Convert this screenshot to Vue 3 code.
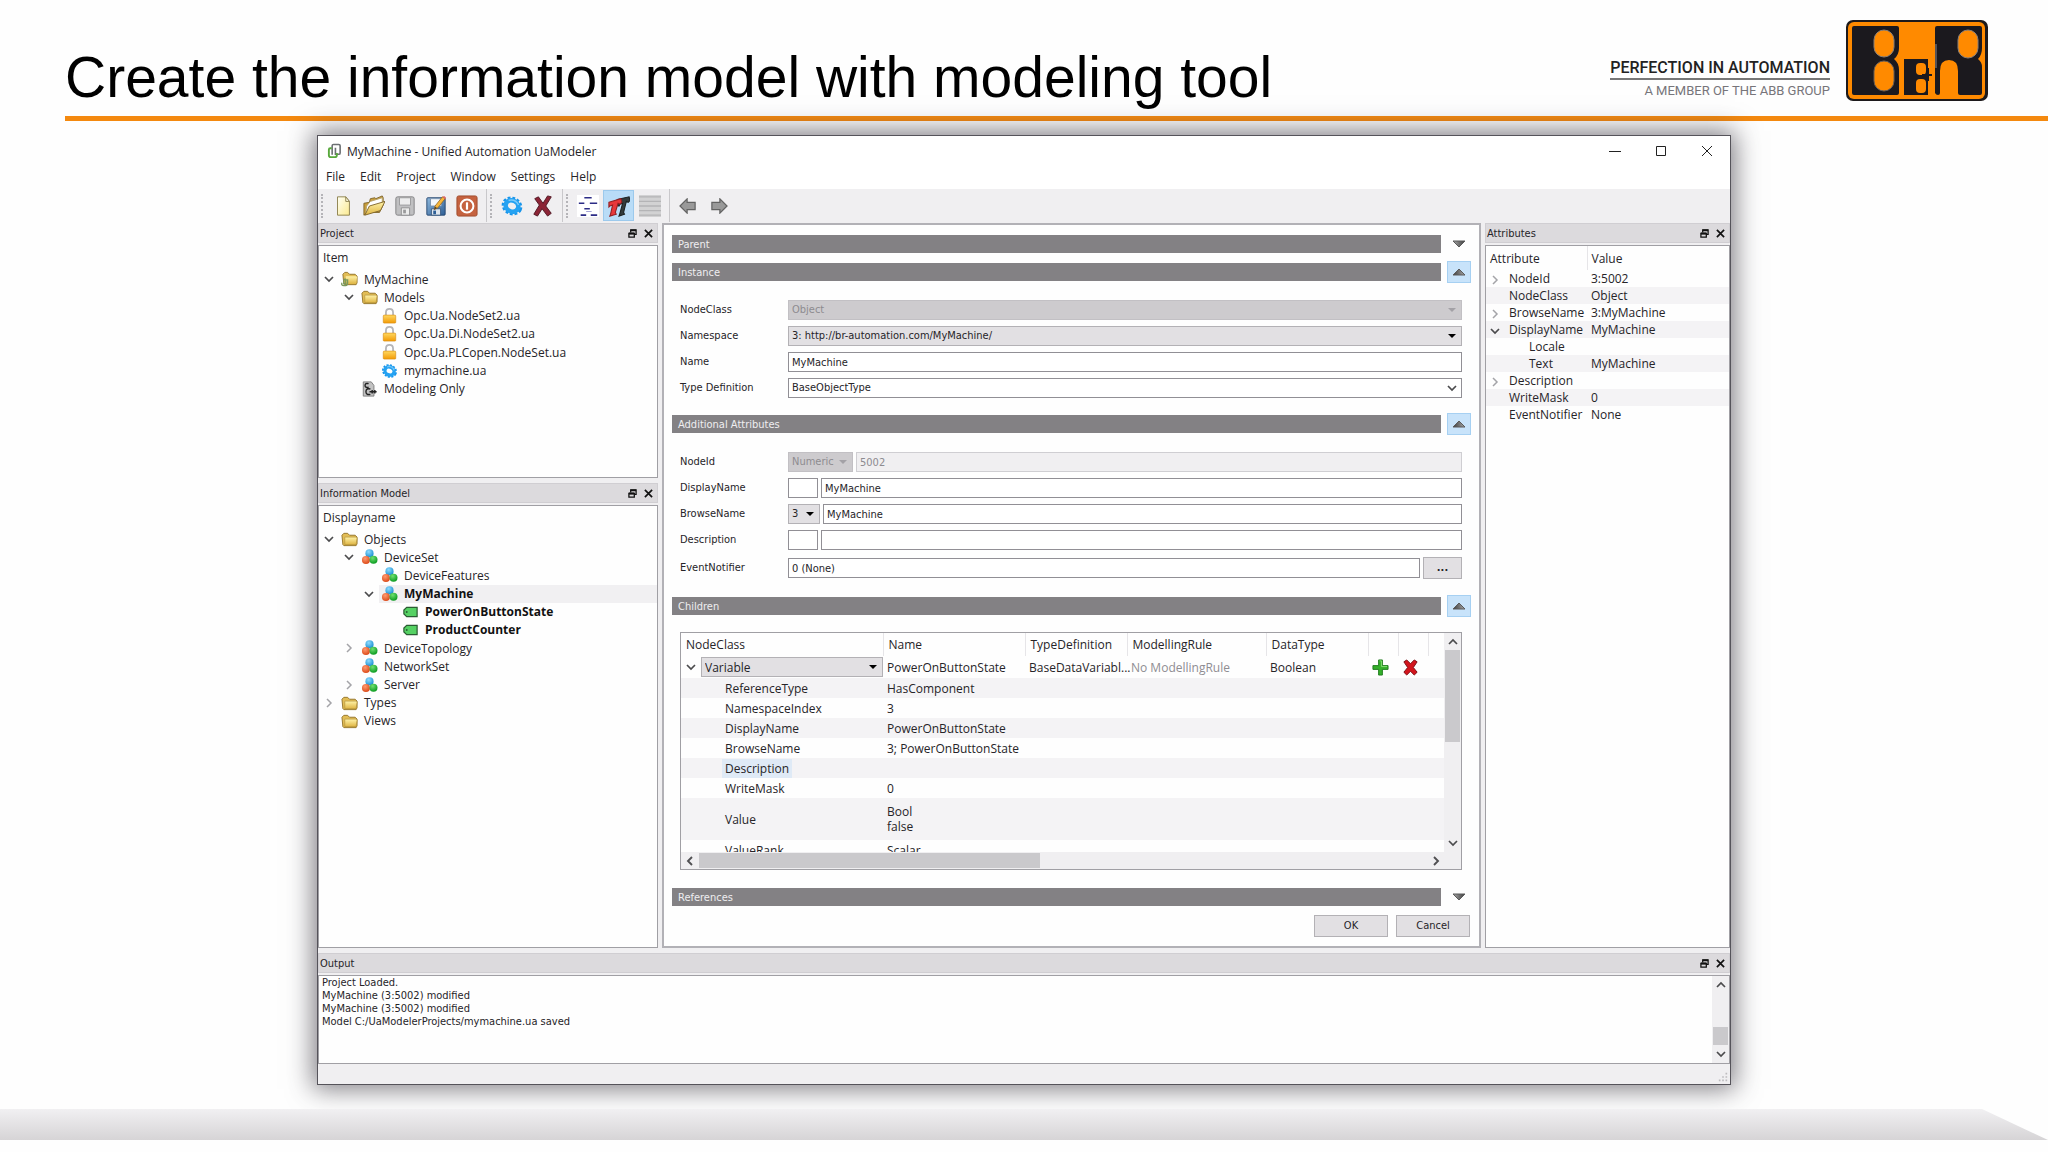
<script setup>
import { ref } from 'vue'

const menus = ['File', 'Edit', 'Project', 'Window', 'Settings', 'Help']

const toolGroups = [
  [
    { icon: 'new', label: 'New' },
    { icon: 'open', label: 'Open' },
    { icon: 'save', label: 'Save' },
    { icon: 'saveas', label: 'Save as' },
    { icon: 'power', label: 'Close project' }
  ],
  [
    { icon: 'gear', label: 'Generate' },
    { icon: 'cross', label: 'Delete' }
  ],
  [
    { icon: 'list', label: 'Tree view' },
    { icon: 'types', label: 'Type view', active: true },
    { icon: 'lines', label: 'Table view' }
  ]
]

const projectTree = [
  { depth: 0, arrow: 'open', icon: 'project', text: 'MyMachine' },
  { depth: 1, arrow: 'open', icon: 'folder', text: 'Models' },
  { depth: 2, icon: 'lock', text: 'Opc.Ua.NodeSet2.ua' },
  { depth: 2, icon: 'lock', text: 'Opc.Ua.Di.NodeSet2.ua' },
  { depth: 2, icon: 'lock', text: 'Opc.Ua.PLCopen.NodeSet.ua' },
  { depth: 2, icon: 'gear', text: 'mymachine.ua' },
  { depth: 1, icon: 'code', text: 'Modeling Only' }
]

const modelTree = [
  { depth: 0, arrow: 'open', icon: 'folder', text: 'Objects' },
  { depth: 1, arrow: 'open', icon: 'balls', text: 'DeviceSet' },
  { depth: 2, icon: 'balls', text: 'DeviceFeatures' },
  { depth: 2, arrow: 'open', icon: 'balls', text: 'MyMachine', bold: true, current: true },
  { depth: 3, icon: 'tag', text: 'PowerOnButtonState', bold: true },
  { depth: 3, icon: 'tag', text: 'ProductCounter', bold: true },
  { depth: 1, arrow: 'closed', icon: 'balls', text: 'DeviceTopology' },
  { depth: 1, icon: 'balls', text: 'NetworkSet' },
  { depth: 1, arrow: 'closed', icon: 'balls', text: 'Server' },
  { depth: 0, arrow: 'closed', icon: 'folder', text: 'Types' },
  { depth: 0, icon: 'folder', text: 'Views' }
]

const leftDocks = [
  { title: 'Project', header: 'Item', rows: projectTree, kind: 'project' },
  { title: 'Information Model', header: 'Displayname', rows: modelTree, kind: 'model' }
]

const attributes = [
  { arrow: 'closed', name: 'NodeId', value: '3:5002' },
  { name: 'NodeClass', value: 'Object' },
  { arrow: 'closed', name: 'BrowseName', value: '3:MyMachine' },
  { arrow: 'open', name: 'DisplayName', value: 'MyMachine' },
  { child: true, name: 'Locale', value: '' },
  { child: true, name: 'Text', value: 'MyMachine' },
  { arrow: 'closed', name: 'Description', value: '' },
  { name: 'WriteMask', value: '0' },
  { name: 'EventNotifier', value: 'None' }
]

const childProps = [
  { name: 'ReferenceType', value: ['HasComponent'] },
  { name: 'NamespaceIndex', value: ['3'] },
  { name: 'DisplayName', value: ['PowerOnButtonState'] },
  { name: 'BrowseName', value: ['3; PowerOnButtonState'] },
  { name: 'Description', value: [''], hover: true },
  { name: 'WriteMask', value: ['0'] },
  { name: 'Value', value: ['Bool', 'false'] },
  { name: 'ValueRank', value: ['Scalar'] }
]

const outputLines = [
  'Project Loaded.',
  'MyMachine (3:5002) modified',
  'MyMachine (3:5002) modified',
  'Model C:/UaModelerProjects/mymachine.ua saved'
]

const name = ref('MyMachine')
const displayName = ref('MyMachine')
const browseName = ref('MyMachine')
</script>

<template>
  <div class="slide">
    <svg class="sprite" aria-hidden="true">
      <defs>
        <linearGradient id="gFolder" x1="0" y1="0" x2="0" y2="1"><stop offset="0" stop-color="#fff3a8" /><stop offset="1" stop-color="#dfb544" /></linearGradient>
        <linearGradient id="gLock" x1="0" y1="0" x2="0" y2="1"><stop offset="0" stop-color="#ffd860" /><stop offset="1" stop-color="#f29a05" /></linearGradient>
        <linearGradient id="gPage" x1="0" y1="0" x2="1" y2="1"><stop offset="0" stop-color="#fffff4" /><stop offset="1" stop-color="#fbea90" /></linearGradient>
        <linearGradient id="gDisk" x1="0" y1="0" x2="1" y2="1"><stop offset="0" stop-color="#8db7dc" /><stop offset="1" stop-color="#2e5f96" /></linearGradient>
        <linearGradient id="gTri" x1="0" y1="0" x2="1" y2="0"><stop offset="0" stop-color="#a8a8a8" /><stop offset="1" stop-color="#3c3c3c" /></linearGradient>
        <radialGradient id="gBlue" cx=".4" cy=".3" r=".7"><stop offset="0" stop-color="#8fdcff" /><stop offset="1" stop-color="#1a8fd0" /></radialGradient>
        <radialGradient id="gRed" cx=".4" cy=".3" r=".7"><stop offset="0" stop-color="#ff9a70" /><stop offset="1" stop-color="#dc4a18" /></radialGradient>
        <radialGradient id="gGreen" cx=".4" cy=".3" r=".7"><stop offset="0" stop-color="#6fe070" /><stop offset="1" stop-color="#0d9c22" /></radialGradient>
      </defs>
      <symbol id="ua-logo" viewBox="0 0 16 16"><path d="M5.500 12V2.500q0-1.500 1.500-1.500h5.500q1.500 0 1.500 1.500V10q0 1.500-1.500 1.500H9V4.500" fill="none" stroke="#6b6f72" stroke-width="1.700" /><path d="M5 5H3.500Q2 5 2 6.500v6Q2 14.500 4 14.500h4.500q2 0 2-2V10" fill="none" stroke="#58a83c" stroke-width="2" /></symbol>
      <symbol id="new" viewBox="0 0 24 24"><path d="M6 2h9l4 5v15H6z" fill="url(#gPage)" stroke="#8a7e4a" /><path d="M15 2v5h4z" fill="#fffbe0" stroke="#8a7e4a" /></symbol>
      <symbol id="open" viewBox="0 0 24 24"><path d="M1 9l6-1 1-4 5-1 1 1 7-3 1 2v8l-4 8H5l-4 3z" fill="#c99e3a" stroke="#7e642a" /><path d="M4 12l4-5 13-4v5L9 15l-6 5z" fill="#fff" stroke="#b7a46c" /><path d="M2 22l5-10 17-5-5 10z" fill="url(#gFolder)" stroke="#7e642a" /></symbol>
      <symbol id="save" viewBox="0 0 24 24"><rect x="2" y="2" width="20" height="20" rx="2" fill="#c0c0c2" stroke="#7e7e80" /><path d="M6 3h12v8H6z" fill="#ededee" stroke="#98989a" /><path d="M8 14h9v8H8z" fill="#ececec" stroke="#8e8e90" /><path d="M10 16h3v4h-3z" fill="#99999b" /></symbol>
      <symbol id="saveas" viewBox="0 0 24 24"><rect x="2" y="3" width="20" height="19" rx="1" fill="url(#gDisk)" stroke="#24456e" /><path d="M6 4h12v8H6z" fill="#f4f7fb" stroke="#7b92ad" /><path d="M7 15h10v7H7z" fill="#dfe6ee" stroke="#3a5a80" /><path d="M9 17h3v4H9z" fill="#2e5f96" /><path d="M10 16l1-4L19 2l3 2-8 10z" fill="#f7b63a" stroke="#8a5c1c" stroke-width=".8" /><path d="M19 2l2-1 2 2-1 2z" fill="#e06a6a" /><path d="M10 16l1-3 2 1z" fill="#333" /></symbol>
      <symbol id="power" viewBox="0 0 24 24"><rect x="1" y="1" width="22" height="22" rx="2" fill="#c5623f" stroke="#a04a2c" /><circle cx="12" cy="12" r="7" fill="none" stroke="#fff" stroke-width="2.200" /><path d="M12 8v8" stroke="#fff" stroke-width="2.400" /></symbol>
      <symbol id="gear" viewBox="0 0 24 24"><g transform="rotate(25 12 12)"><ellipse cx="12" cy="12" rx="10" ry="8.500" fill="none" stroke="#1794ea" stroke-width="3" stroke-dasharray="3 2" /><ellipse cx="12" cy="12" rx="7" ry="6" fill="none" stroke="#25a2f2" stroke-width="5" /><path d="M6 8q6-5 12 0" fill="none" stroke="#7ccbfa" stroke-width="1.500" /></g></symbol>
      <symbol id="cross" viewBox="0 0 24 24"><path d="M3 4l4-2 5 7 5-8 4 1-6 10 6 8-4 3-6-8-5 8-4-2 6-10z" fill="#8c2436" stroke="#4e1521" /></symbol>
      <symbol id="list" viewBox="0 0 24 24"><path fill="#fff" d="M0 0h24v24H0z" /><path d="M8 3h8M2 9h6M14 9h8M8 15h6M4 22h6M15 22h7" stroke="#2c2c86" stroke-width="1.800" /><path d="M10 18h6" stroke="#9a9ad0" /></symbol>
      <symbol id="types" viewBox="0 0 24 24"><path d="M10 5l13-3 1 4-2 2-2-1-3 12 1 2-6 2 1-3 3-11-3 1-1 2-3-1z" fill="#333b3c" stroke="#1c2222" stroke-width="1.200" /><path d="M1 8l13-4 1 4-2 2-2-1-3 10 1 2-7 2 1-3 2-9-3 1-1 1z" fill="#e8383b" stroke="#951f22" stroke-width="1.200" /></symbol>
      <symbol id="lines" viewBox="0 0 24 24"><path fill="#d2d2d3" d="M0 0h24v24H0z" /><path d="M0 2h24M0 7h24M0 12h24M0 17h24M0 22h24" stroke="#b4b4b6" stroke-width="1.500" /></symbol>
      <symbol id="arrow" viewBox="0 0 20 18"><path d="M1 9l8-8v4h9v8H9v4z" fill="#999" stroke="#636363" stroke-width="1.400" /></symbol>
      <symbol id="folder" viewBox="0 0 18 16"><path d="M2 14L1 4l2-2h4l2 2h6l2 2v7l-1 2H3z" fill="#e2bd55" stroke="#94752a" /><path d="M4 6h12l1 1-1 7H4z" fill="url(#gFolder)" stroke="#b08e37" stroke-width=".7" /></symbol>
      <symbol id="project" viewBox="0 0 18 16"><path d="M3 13L2 3l2-2h3l2 2h6l2 2v7l-1 2H4z" fill="#e2bd55" stroke="#94752a" /><path d="M5 5h11l1 1-1 7H5z" fill="url(#gFolder)" /><path d="M1 12q-1 3 2 3h2q2 0 2-3V9H5v4H3V10q0-2 2-2" fill="none" stroke="#79985c" stroke-width="1.400" /></symbol>
      <symbol id="lock" viewBox="0 0 18 18"><path d="M5 9V5q0-4 4-4t4 4v4" fill="none" stroke="#b5b5b8" stroke-width="2" /><rect x="2" y="8" width="14" height="9" rx="1" fill="url(#gLock)" stroke="#d98c10" stroke-width=".7" /></symbol>
      <symbol id="code" viewBox="0 0 18 18"><path d="M2 1h9l3 4v12H2z" fill="#c2c2c2" stroke="#777" /><path d="M8 3Q4 2 4 5t4 2M10 9q-5-1-5 3t5 3M9 12h8M12 10v4M15 10v4" fill="none" stroke="#222" stroke-width="1.600" /></symbol>
      <symbol id="balls" viewBox="0 0 18 18"><circle cx="9" cy="5" r="4.600" fill="url(#gBlue)" /><circle cx="5" cy="12.500" r="4.500" fill="url(#gRed)" /><circle cx="13.500" cy="12" r="4.500" fill="url(#gGreen)" /></symbol>
      <symbol id="tag" viewBox="0 0 18 14"><path d="M5 2h11v10H5L2 9V5z" fill="#55d163" stroke="#2b5c33" stroke-width="1.300" /><circle cx="5" cy="7" r="1" fill="#2b5c33" /></symbol>
      <symbol id="open-arrow" viewBox="0 0 10 10"><path d="M1 3l4 4 4-4" fill="none" stroke="#4b4b4d" stroke-width="1.700" /></symbol>
      <symbol id="closed-arrow" viewBox="0 0 10 10"><path d="M3 1l4 4-4 4" fill="none" stroke="#a4a4a8" stroke-width="1.500" /></symbol>
      <symbol id="right-arrow" viewBox="0 0 10 10"><path d="M3 1l4 4-4 4" fill="none" stroke="#505052" stroke-width="1.900" /></symbol>
      <symbol id="caret" viewBox="0 0 10 10"><path d="M1 3h8L5 7z" /></symbol>
      <symbol id="tri" viewBox="0 0 14 8"><path d="M1 1h12L7 7z" fill="url(#gTri)" stroke="#5a5a5a" /></symbol>
      <symbol id="float" viewBox="0 0 10 10"><path d="M3 4V1h6v5H7" fill="none" stroke="#111" stroke-width="1.400" /><path d="M3 1.500h6M1 5h6" stroke="#111" stroke-width="2" /><path d="M1 5h6v4H1z" fill="none" stroke="#111" stroke-width="1.400" /></symbol>
      <symbol id="close" viewBox="0 0 10 10"><path d="M1 1l8 8M9 1L1 9" stroke="#111" stroke-width="1.900" /></symbol>
      <symbol id="plus" viewBox="0 0 18 18"><path d="M7 1h4v6h6v4h-6v6H7v-6H1V7h6z" fill="#35b02a" stroke="#1e7a1c" /><path d="M8 2h2v6h6" fill="none" stroke="#85dd73" /></symbol>
      <symbol id="remove" viewBox="0 0 18 18"><path d="M2 3l3-2 4 4 4-4 3 2-4 6 4 5-3 3-4-4-4 4-3-3 4-5z" fill="#d3151d" stroke="#7a0c12" /></symbol>
    </svg>

    <header class="slide-head">
      <h1>Create the information model with modeling tool</h1>
      <div class="brand">
        <div class="claim">
          <strong>PERFECTION IN AUTOMATION</strong>
          <span>A MEMBER OF THE ABB GROUP</span>
        </div>
        <svg class="logo" viewBox="0 0 142 81" role="img" aria-label="B&amp;R">
          <rect width="142" height="81" rx="7" fill="#1d1a1c" />
          <rect x="2" y="2" width="137" height="77" rx="6" fill="#ff8a00" />
          <path d="M8 6h43q2 0 2 2v20q0 7-5 11 5 4 5 11v23q0 2-2 2H8q-2 0-2-2V8q0-2 2-2z" fill="#1b191e" />
          <rect x="28" y="10" width="20" height="27" rx="10" fill="#ff8a00" stroke="#8a8078" />
          <rect x="28" y="41" width="20" height="30" rx="10" fill="#ff8a00" stroke="#6a6058" />
          <path d="M58 39h24v36H58z" fill="#1b191e" />
          <rect x="70" y="43" width="10" height="12" rx="4" fill="#ff8a00" />
          <rect x="70" y="59" width="10" height="14" rx="4" fill="#ff8a00" />
          <path d="M76 55h10M82 48v13" stroke="#1b191e" stroke-width="2" />
          <path d="M91 6h43q2 0 2 2v20q0 7-4 11 4 3 4 8v26q0 2-2 2h-20q-2 0-2-2V51q0-11-9-11t-9 11v22q0 2-2 2t-3-2V8q0-2 2-2z" fill="#1b191e" />
          <path d="M90 24v24" stroke="#8f8c90" />
          <rect x="112" y="10" width="20" height="28" rx="10" fill="#ff8a00" stroke="#8a8078" />
        </svg>
      </div>
    </header>

    <main class="window">
      <div class="titlebar">
        <svg class="app-icon"><use href="#ua-logo" /></svg>
        <span>MyMachine - Unified Automation UaModeler</span>
        <div class="win-buttons">
          <button type="button" aria-label="Minimize"><svg viewBox="0 0 12 12"><path d="M0 6.500h12" /></svg></button>
          <button type="button" aria-label="Maximize"><svg viewBox="0 0 12 12"><path d="M1.500 1.500h9v9h-9z" /></svg></button>
          <button type="button" aria-label="Close"><svg viewBox="0 0 12 12"><path d="M1 1l10 10M11 1L1 11" /></svg></button>
        </div>
      </div>

      <nav class="menubar">
        <button v-for="m in menus" :key="m" type="button">{{ m }}</button>
      </nav>

      <div class="toolbar">
        <div v-for="(group, i) in toolGroups" :key="i" class="tool-group">
          <i class="grip"></i>
          <button v-for="t in group" :key="t.icon" type="button" :aria-label="t.label" :class="{ active: t.active }">
            <svg><use :href="'#' + t.icon" /></svg>
          </button>
        </div>
        <div class="tool-group nav-group">
          <button type="button" aria-label="Back"><svg><use href="#arrow" /></svg></button>
          <button type="button" aria-label="Forward"><svg class="flip"><use href="#arrow" /></svg></button>
        </div>
      </div>

      <div class="work">
        <div class="left">
          <section v-for="d in leftDocks" :key="d.title" class="dock" :class="d.kind">
            <header class="dock-head">
              <h2>{{ d.title }}</h2>
              <button type="button" aria-label="Float"><svg><use href="#float" /></svg></button>
              <button type="button" aria-label="Close"><svg><use href="#close" /></svg></button>
            </header>
            <div class="pane">
              <div class="tree-head">{{ d.header }}</div>
              <ul class="tree">
                <li v-for="r in d.rows" :key="r.text" :class="['depth' + r.depth, { bold: r.bold }]">
                  <span class="twist"><svg v-if="r.arrow"><use :href="'#' + r.arrow + '-arrow'" /></svg></span>
                  <span class="node" :class="{ current: r.current }">
                    <svg><use :href="'#' + r.icon" /></svg>{{ r.text }}
                  </span>
                </li>
              </ul>
            </div>
          </section>
        </div>

        <form class="editor" @submit.prevent>
          <div class="section-head">
            <h3>Parent</h3>
            <button type="button" aria-label="Expand Parent"><svg><use href="#tri" /></svg></button>
          </div>
          <div class="section-head">
            <h3>Instance</h3>
            <button type="button" class="on" aria-label="Collapse Instance"><svg><use href="#tri" /></svg></button>
          </div>
          <div class="fields">
            <div class="field">
              <label for="nodeClass">NodeClass</label>
              <span class="combo off"><select id="nodeClass" disabled><option>Object</option></select><svg><use href="#caret" /></svg></span>
            </div>
            <div class="field">
              <label for="namespace">Namespace</label>
              <span class="combo"><select id="namespace"><option>3: http://br-automation.com/MyMachine/</option></select><svg><use href="#caret" /></svg></span>
            </div>
            <div class="field">
              <label for="name">Name</label>
              <input id="name" v-model="name" type="text">
            </div>
            <div class="field">
              <label for="typeDef">Type Definition</label>
              <span class="combo plain"><select id="typeDef"><option>BaseObjectType</option></select><svg><use href="#open-arrow" /></svg></span>
            </div>
          </div>

          <div class="section-head">
            <h3>Additional Attributes</h3>
            <button type="button" class="on" aria-label="Collapse Additional Attributes"><svg><use href="#tri" /></svg></button>
          </div>
          <div class="fields">
            <div class="field">
              <label for="nodeId">NodeId</label>
              <span class="combo off id-kind"><select aria-label="Identifier type" disabled><option>Numeric</option></select><svg><use href="#caret" /></svg></span>
              <input id="nodeId" type="text" value="5002" disabled>
            </div>
            <div class="field">
              <label for="displayName">DisplayName</label>
              <input class="locale" type="text" aria-label="DisplayName locale">
              <input id="displayName" v-model="displayName" type="text">
            </div>
            <div class="field">
              <label for="browseName">BrowseName</label>
              <span class="combo ns"><select aria-label="Namespace index"><option>3</option></select><svg><use href="#caret" /></svg></span>
              <input id="browseName" v-model="browseName" type="text">
            </div>
            <div class="field">
              <label for="description">Description</label>
              <input class="locale" type="text" aria-label="Description locale">
              <input id="description" type="text">
            </div>
            <div class="field last">
              <label for="eventNotifier">EventNotifier</label>
              <input id="eventNotifier" type="text" value="0 (None)" readonly>
              <button type="button" class="push more">...</button>
            </div>
          </div>

          <div class="section-head">
            <h3>Children</h3>
            <button type="button" class="on" aria-label="Collapse Children"><svg><use href="#tri" /></svg></button>
          </div>
          <div class="fields list">
            <div class="child-box">
              <div class="child-view">
                <table class="children">
                  <colgroup><col class="c1"><col class="c2"><col class="c3"><col class="c4"><col class="c5"><col class="c6"><col class="c6"><col></colgroup>
                  <thead>
                    <tr><th>NodeClass</th><th>Name</th><th>TypeDefinition</th><th>ModellingRule</th><th>DataType</th><th></th><th></th><th></th></tr>
                  </thead>
                  <tbody>
                    <tr class="variable">
                      <td>
                        <div class="class-cell">
                          <span class="twist"><svg><use href="#open-arrow" /></svg></span>
                          <span class="combo"><select aria-label="NodeClass of child"><option>Variable</option></select><svg><use href="#caret" /></svg></span>
                        </div>
                      </td>
                      <td>PowerOnButtonState</td>
                      <td>BaseDataVariabl...</td>
                      <td class="dim">No ModellingRule</td>
                      <td>Boolean</td>
                      <td><button type="button" aria-label="Add"><svg><use href="#plus" /></svg></button></td>
                      <td><button type="button" aria-label="Remove"><svg><use href="#remove" /></svg></button></td>
                      <td></td>
                    </tr>
                    <tr v-for="p in childProps" :key="p.name" :class="{ tall: p.value.length > 1 }">
                      <td class="prop"><span :class="{ hover: p.hover }">{{ p.name }}</span></td>
                      <td colspan="7"><div v-for="v in p.value" :key="v">{{ v }}</div></td>
                    </tr>
                  </tbody>
                </table>
              </div>
              <div class="vbar" aria-hidden="true">
                <svg class="up"><use href="#open-arrow" /></svg><i></i><svg><use href="#open-arrow" /></svg>
              </div>
              <div class="hbar" aria-hidden="true">
                <svg class="flip"><use href="#right-arrow" /></svg><i></i><svg><use href="#right-arrow" /></svg>
              </div>
            </div>
          </div>

          <div class="section-head">
            <h3>References</h3>
            <button type="button" aria-label="Expand References"><svg><use href="#tri" /></svg></button>
          </div>
          <div class="actions">
            <button type="submit" class="push">OK</button>
            <button type="button" class="push">Cancel</button>
          </div>
        </form>

        <section class="dock">
          <header class="dock-head">
            <h2>Attributes</h2>
            <button type="button" aria-label="Float"><svg><use href="#float" /></svg></button>
            <button type="button" aria-label="Close"><svg><use href="#close" /></svg></button>
          </header>
          <div class="pane">
            <table class="attrs">
              <thead><tr><th>Attribute</th><th>Value</th></tr></thead>
              <tbody>
                <tr v-for="a in attributes" :key="a.name">
                  <td :class="{ child: a.child }"><span class="twist"><svg v-if="a.arrow"><use :href="'#' + a.arrow + '-arrow'" /></svg></span>{{ a.name }}</td>
                  <td>{{ a.value }}</td>
                </tr>
              </tbody>
            </table>
          </div>
        </section>
      </div>

      <section class="dock output">
        <header class="dock-head">
          <h2>Output</h2>
          <button type="button" aria-label="Float"><svg><use href="#float" /></svg></button>
          <button type="button" aria-label="Close"><svg><use href="#close" /></svg></button>
        </header>
        <div class="pane log">
          <div class="lines"><p v-for="(l, i) in outputLines" :key="i">{{ l }}</p></div>
          <div class="vbar" aria-hidden="true">
            <svg class="up"><use href="#open-arrow" /></svg><i></i><svg><use href="#open-arrow" /></svg>
          </div>
        </div>
      </section>

      <div class="status">
        <svg viewBox="0 0 12 12" aria-hidden="true"><path d="M9 1h2v2H9zM9 5h2v2H9zM9 9h2v2H9zM5 5h2v2H5zM5 9h2v2H5zM1 9h2v2H1z" fill="#bdbcbf" /></svg>
      </div>
    </main>

    <footer class="slide-foot"></footer>
  </div>
</template>

<style>
body { margin: 0; background: #fefefe; }
</style>

<style scoped>
.slide {
  --segoe: "Open Sans", "Noto Sans", sans-serif;
  --tahoma: "DejaVu Sans Condensed", "DejaVu Sans", sans-serif;
  --line: #a09fa4;
  --face: #f0eff1;
  color: #262428;
  font-family: var(--segoe);
  font-size: 12px;
  overflow: hidden;
}
*, *::before, *::after { box-sizing: border-box; }
h1, h2, h3, p, ul { margin: 0; padding: 0; font-weight: normal; }
button, input, select { font: inherit; color: inherit; margin: 0; padding: 0; border: 0; background: none; border-radius: 0; }
svg { display: block; }
.sprite { position: absolute; width: 0; height: 0; }
.flip { transform: rotate(180deg); }

.slide-head {
  display: flex;
  justify-content: space-between;
  height: 121px;
  margin-left: 65px;
  padding-right: 60px;
  border-bottom: 5px solid #f4890f;
}
.slide-head h1 { margin-top: 45px; font: 57px/64px "Liberation Sans", Arial, sans-serif; color: #000; white-space: nowrap; }
.brand { display: flex; gap: 16px; padding-top: 20px; }
.logo { width: 142px; height: 81px; }
.claim { padding-top: 37px; font-family: "Roboto", sans-serif; text-align: right; white-space: nowrap; }
.claim strong { display: block; height: 23px; border-bottom: 2px solid #777; font-size: 16px; font-weight: 500; line-height: 21px; color: #222; }
.claim span { display: block; font-size: 13px; line-height: 21px; color: #77757a; }

.window {
  position: relative;
  margin: 14px 317px 0;
  border: 1px solid #55535a;
  background: var(--face);
  box-shadow: 0 0 24px 4px rgba(50, 46, 56, .62);
}
.titlebar { display: flex; align-items: center; height: 30px; padding-left: 9px; background: #fff; }
.app-icon { width: 15px; height: 16px; margin-right: 5px; }
.win-buttons { display: flex; margin-left: auto; }
.win-buttons button { width: 46px; height: 30px; display: grid; place-items: center; }
.win-buttons svg { width: 12px; height: 12px; fill: none; stroke: #222; }
.menubar { display: flex; gap: 15px; height: 23px; padding: 0 8px 2px; background: #fff; }

.toolbar { display: flex; height: 33px; align-items: stretch; }
.tool-group { display: flex; align-items: center; padding-right: 4px; border-right: 1px solid #c9c8cb; }
.tool-group button { width: 31px; height: 31px; display: grid; place-items: center; }
.tool-group button.active { background: #b9dcf7; border: 1px solid #9cc9ec; }
.tool-group svg { width: 22px; height: 22px; }
.grip { width: 3px; height: 24px; margin: 0 3px; border-left: 2px dotted #b5b4b8; }
.nav-group { border: 0; padding-left: 2px; }
.nav-group svg { width: 18px; height: 16px; }

.work { display: grid; grid-template-columns: 340px minmax(0, 1fr) 245px; column-gap: 4px; padding-top: 1px; }
.left { display: flex; flex-direction: column; gap: 5px; }
.dock { display: flex; flex-direction: column; gap: 2px; }
.dock-head { display: flex; align-items: center; height: 20px; padding: 0 1px; background: #dcdadd; border: 1px solid #d0ced2; }
.dock-head h2 { flex: 1; padding-top: 1px; font: 11px/18px var(--tahoma); }
.dock-head button { width: 16px; height: 18px; display: grid; place-items: center; }
.dock-head svg { width: 9px; height: 9px; }
.pane { flex: 1; background: #fefefe; border: 1px solid var(--line); }
.project .pane { flex: none; height: 233px; }
.model { flex: 1; }
.tree-head { height: 24px; padding: 0 4px; line-height: 24px; }
.tree { list-style: none; display: grid; grid-auto-rows: 1fr; }
.project .tree { height: 128px; }
.model .tree { height: 200px; }
.tree li { display: flex; align-items: stretch; white-space: nowrap; }
.depth1 { padding-left: 20px; }
.depth2 { padding-left: 40px; }
.depth3 { padding-left: 61px; }
.twist { flex: none; width: 20px; display: inline-grid; place-items: center; }
.twist svg { width: 10px; height: 10px; }
.node { flex: 1; display: flex; align-items: center; gap: 6px; padding-left: 2px; }
.node svg { width: 17px; height: 16px; flex: none; }
.node.current { background: #f1f0f2; }
.bold { font-weight: bold; color: #111; }

.editor { padding: 8px 8px 9px; background: #fefefe; border: 2px solid #b2b1b6; font: 11px/14px var(--tahoma); }
.section-head { display: flex; align-items: center; gap: 6px; height: 22px; }
.section-head + .section-head { margin-top: 6px; }
.section-head h3 { flex: 1; height: 18px; padding: 1px 0 0 6px; background: #838184; color: #efeef0; font: 11px/17px var(--tahoma); }
.section-head button { width: 24px; height: 22px; display: grid; place-items: center; border: 1px solid transparent; }
.section-head button.on { background: #c8e3fa; border-color: #a6d0f2; }
.section-head svg { width: 14px; height: 8px; }
.section-head .on svg { transform: rotate(180deg); }
.fields { display: flex; flex-direction: column; gap: 6px; padding: 17px 9px 15px 8px; }
.fields.list { padding: 15px 9px 16px 8px; }
.field { display: flex; align-items: center; gap: 3px; height: 20px; }
.field.last { height: 24px; }
.field label { width: 105px; flex: none; }
.field > :last-child:not(button) { flex: 1; }
input { flex: 1; min-width: 0; height: 20px; padding-left: 3px; border: 1px solid #918f95; background: #fff; }
input:disabled { border-color: #cfced2; background: #f0eff1; color: #8d8b90; }
.locale { flex: none; width: 30px; }
.combo { display: grid; align-items: center; height: 20px; border: 1px solid #b3b1b5; background: #e2e0e3; }
.combo select { grid-area: 1 / 1; width: 100%; height: 18px; padding-left: 3px; appearance: none; outline: 0; }
.combo > svg { grid-area: 1 / 1; justify-self: end; width: 10px; height: 10px; margin-right: 4px; pointer-events: none; }
.combo.off { background: #cdcbce; border-color: #c2c0c4; color: #8d8b90; fill: #a3a1a6; }
.combo.off select { opacity: 1; }
.combo.plain { background: #fff; border-color: #918f95; }
.id-kind { width: 65px; }
.ns { width: 32px; }
.push { width: 74px; height: 22px; border: 1px solid #b3b1b5; background: #e2e0e3; }
.push.more { width: 39px; font-weight: bold; }
.actions { display: flex; justify-content: flex-end; gap: 8px; padding: 7px 1px 0; }

.child-box { display: grid; grid-template-columns: minmax(0, 1fr) 17px; grid-template-rows: 219px 17px; height: 238px; border: 1px solid var(--line); font: 12px/15px var(--segoe); }
.child-view { overflow: hidden; }
.children { width: 100%; table-layout: fixed; border-collapse: collapse; white-space: nowrap; }
.c1 { width: 202px; }
.c2 { width: 142px; }
.c3 { width: 102px; }
.c4 { width: 139px; }
.c5 { width: 102px; }
.c6 { width: 30px; }
.children th { height: 23px; padding: 0 0 0 5px; border-right: 1px solid #e6e5e8; text-align: left; font-weight: normal; }
.children th:last-child { border: 0; }
.children td { height: 20px; padding: 0 0 0 4px; }
.children tr.variable td { height: 22px; }
.children tr.variable td:first-child { padding: 0; }
.children tr.tall td { height: 42px; }
.children tbody tr:nth-child(even) { background: #f4f3f5; }
.children td.prop { padding-left: 41px; }
.children td.prop span { display: inline-block; padding: 2px 3px; }
.children td.prop .hover { background: #dfeaf6; }
.children button { display: block; }
.children button svg { width: 17px; height: 17px; }
.class-cell { display: flex; align-items: center; }
.class-cell .combo { flex: 1; }
.dim { color: #8f8d92; }
.vbar { display: flex; flex-direction: column; align-items: center; width: 17px; padding: 4px 0; background: var(--face); }
.vbar svg, .hbar svg { width: 10px; height: 10px; flex: none; }
.vbar .up { transform: rotate(180deg); }
.vbar i { width: 15px; background: #cac9cc; }
.child-box .vbar i { height: 92px; margin: 3px 0 auto; }
.hbar { grid-column: 1 / 3; display: flex; align-items: center; padding: 0 20px 0 4px; background: var(--face); }
.hbar i { width: 341px; height: 15px; margin: 0 auto 0 4px; background: #cac9cc; }

.attrs { width: 100%; border-collapse: collapse; table-layout: fixed; white-space: nowrap; line-height: 15px; }
.attrs th { height: 24px; padding: 0 0 0 4px; text-align: left; font-weight: normal; }
.attrs th:first-child { width: 101px; border-right: 1px solid #e6e5e8; }
.attrs td { height: 17px; padding: 0 0 0 4px; }
.attrs td:first-child { padding-left: 0; }
.attrs td .twist { width: 18px; margin-right: 5px; vertical-align: middle; }
.attrs td.child:first-child { padding-left: 20px; }
.attrs tbody tr:nth-child(even) { background: #f4f3f5; }

.output { margin-top: 5px; }
.log { display: flex; height: 89px; flex: none; font: 11px/13px var(--tahoma); }
.lines { flex: 1; padding: 0 3px; }
.log .vbar i { height: 18px; margin: auto 0 4px; }
.status { display: flex; justify-content: flex-end; align-items: flex-end; height: 20px; padding: 2px; }
.status svg { width: 10px; height: 10px; }

.slide-foot { height: 31px; margin-top: 24px; background: linear-gradient(#f1f0f2, #d6d4d6); clip-path: polygon(0 0, calc(100% - 66px) 0, 100% 100%, 0 100%); }
</style>
